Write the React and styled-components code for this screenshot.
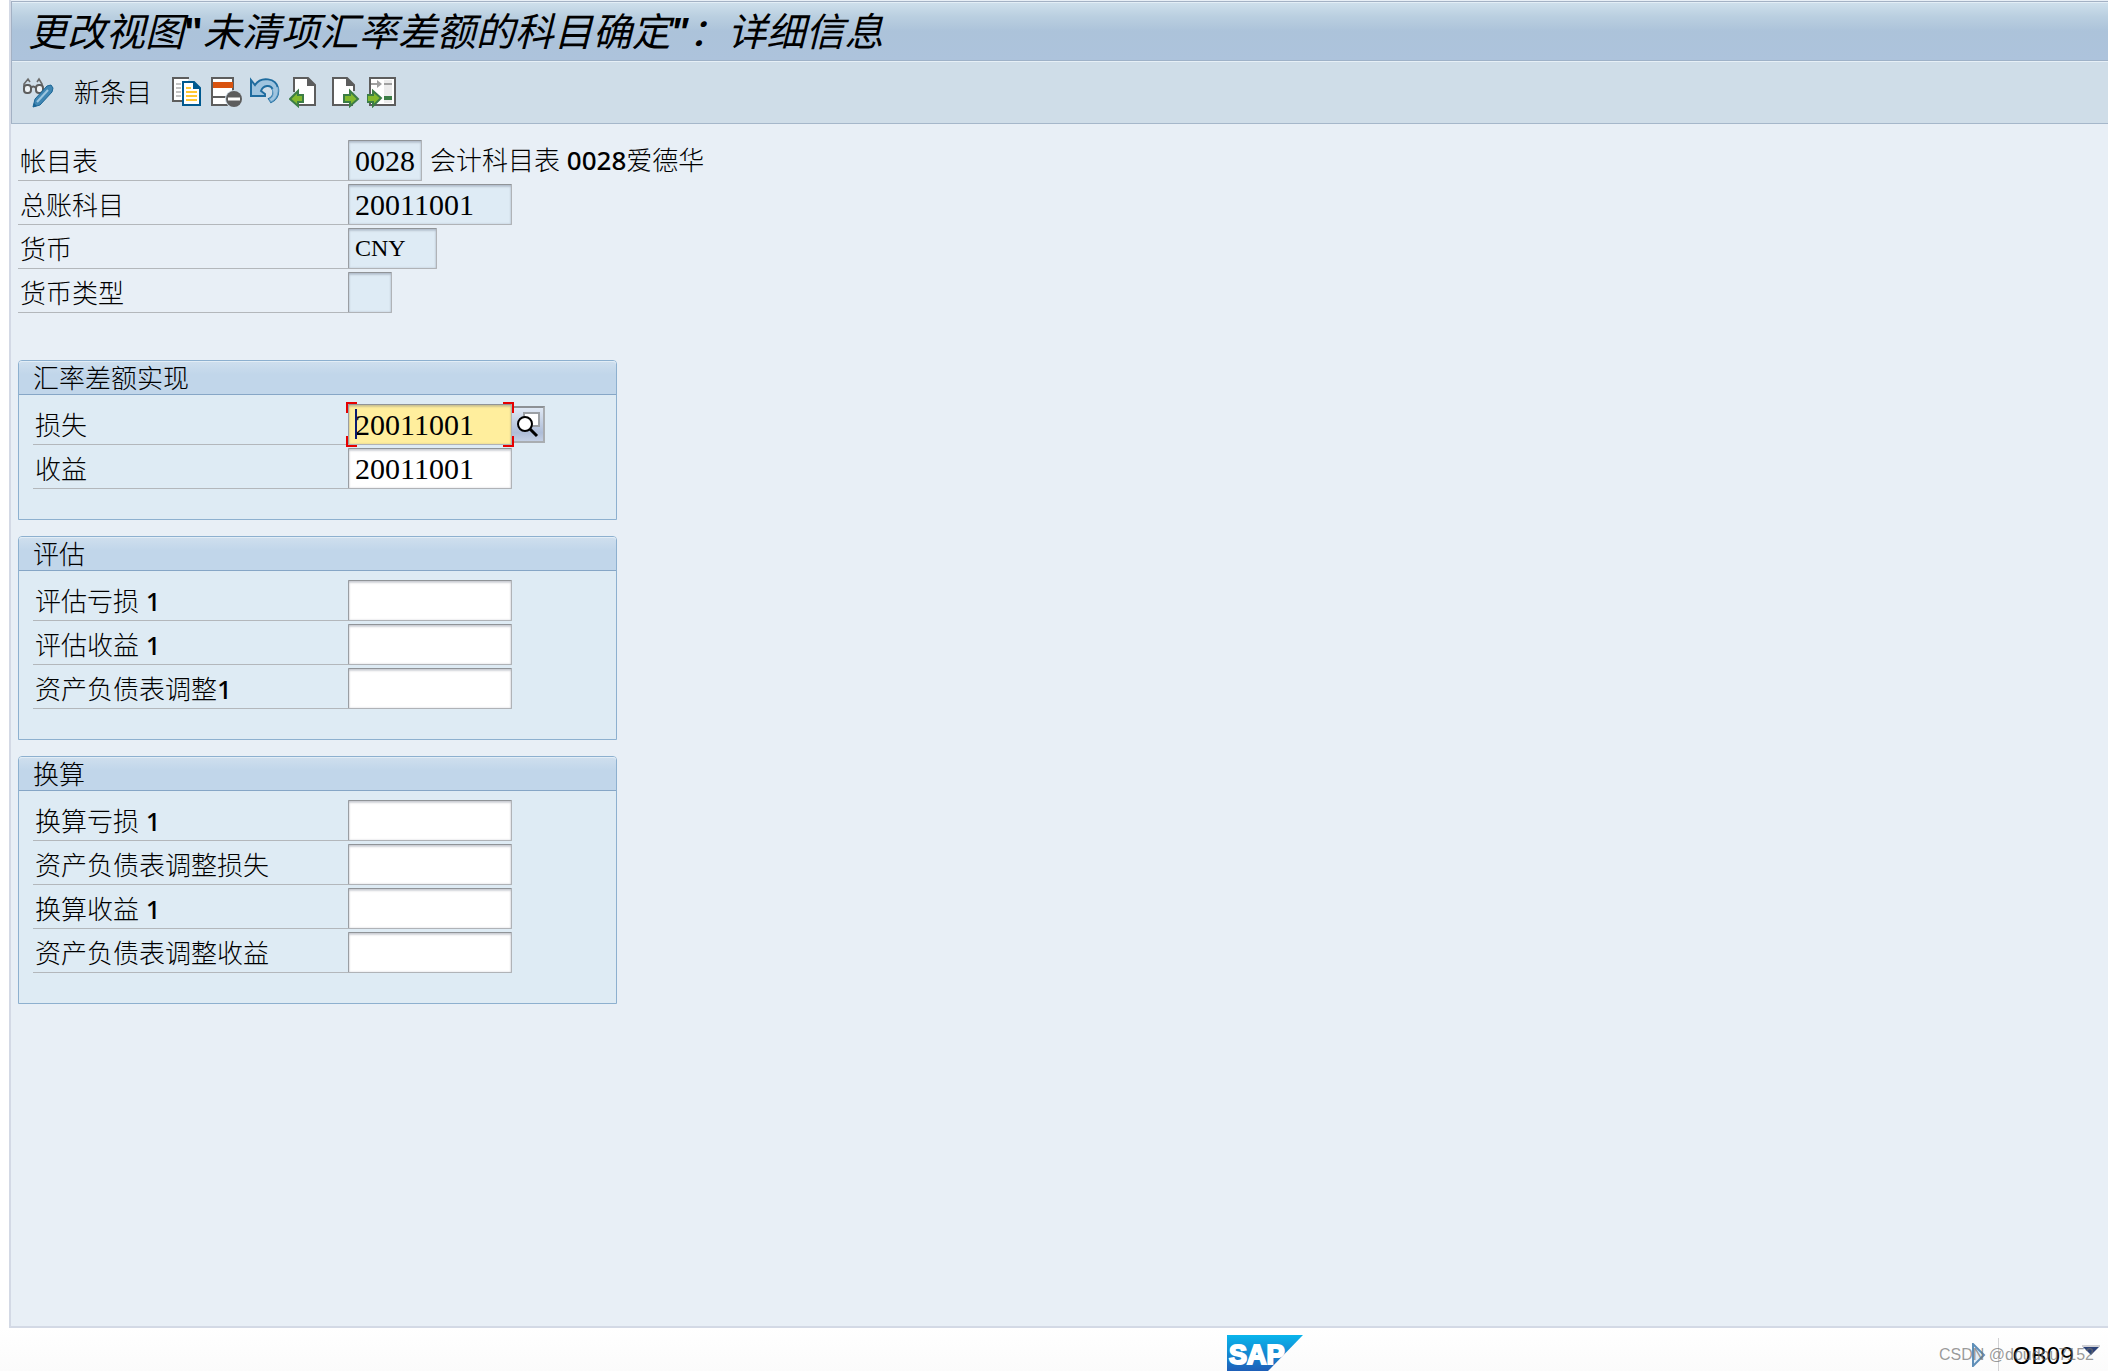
import React from "react";
import styled, { createGlobalStyle, css } from "styled-components";

const sans = `"Noto Sans", "Noto Sans CJK SC", sans-serif`;

const GlobalStyle = createGlobalStyle`
  *, *::before, *::after { box-sizing: border-box; }
  body {
    margin: 0;
    background: #ffffff;
    color: #000000;
    font-family: ${sans};
    font-size: 26px;
    font-weight: 300;
  }
`;

const Page = styled.div`
  display: flex;
  flex-direction: column;
  min-height: 100vh;
  overflow: hidden;
`;

const Window = styled.main`
  flex: 1;
  display: flex;
  flex-direction: column;
  margin-left: 9px;
  padding-top: 1px;
  border-left: 2px solid #d3d9e5;
  border-bottom: 2px solid #d3d9e5;
  background: #e8eff6;
`;

const TitleBar = styled.header`
  display: flex;
  align-items: center;
  height: 60px;
  padding-left: 16px;
  border-top: 1px solid #a3b1c4;
  border-left: 1px solid #a3b1c4;
  border-bottom: 1px solid #9fb2c8;
  background: linear-gradient(#cfe0ec 0%, #bacfe0 25%, #acc3da 50%, #adc3dc 100%);
  box-shadow: inset 0 2px 0 -1px #e3eef6;
`;

const Title = styled.h1`
  margin: 0;
  font-size: 39px;
  line-height: 52px;
  font-style: italic;
  font-weight: 400;
  white-space: pre;
`;

const Quote = styled.span`
  font-weight: 700;
  font-style: ${(p) => (p.$upright ? "normal" : "italic")};
`;

const Toolbar = styled.div`
  display: flex;
  align-items: center;
  gap: 20px;
  height: 63px;
  padding-left: 10px;
  border-left: 1px solid #a3b1c4;
  border-bottom: 1px solid #a5b7ca;
  background: #cfdde8;
  box-shadow: inset 0 1px 0 #e6eff6;
`;

const IconGroup = styled.div`
  display: flex;
  gap: 7px;
`;

const ToolButton = styled.button`
  display: flex;
  align-items: center;
  justify-content: flex-start;
  height: 32px;
  min-width: 32px;
  padding: 0;
  border: 0;
  background: none;
  color: inherit;
  font: inherit;
  line-height: 34px;

  svg { display: block; }
`;

const Content = styled.form`
  display: flex;
  flex-direction: column;
  flex: 1;
  align-items: flex-start;
  gap: 16px;
  padding: 16px 7px;
`;

const Rows = styled.div`
  display: flex;
  flex-direction: column;
  gap: 3px;
  align-self: stretch;
`;

const KeyRows = styled(Rows)`
  margin-bottom: 31px;
`;

const Row = styled.div`
  display: flex;
  align-items: center;
  height: 41px;
`;

const Label = styled.label`
  align-self: stretch;
  width: ${(p) => (p.$nested ? 315 : 330)}px;
  padding-left: 2px;
  border-bottom: 1px solid #b3b7bb;
  line-height: 43px;
  white-space: nowrap;
`;

const Digits = styled.span`
  font-weight: 500;
`;

const FieldBox = styled.span`
  position: relative;
  display: flex;
  height: 41px;
`;

const Field = styled.input`
  width: ${(p) => p.$width}px;
  height: 41px;
  padding: 0 6px;
  border: 1px solid #b0b3b7;
  border-top-color: #909498;
  border-left-color: #9a9ea3;
  border-radius: 1px;
  outline: 0;
  color: #000000;
  font-family: "Liberation Serif", "Noto Sans CJK SC", serif;
  font-size: ${(p) => (p.$letters ? 24 : 30)}px;
  font-weight: 400;
  background: #ffffff;
  box-shadow: inset 0 2px 2px rgba(90, 100, 120, 0.25), inset 0 0 2px rgba(90, 100, 120, 0.3);

  ${(p) => p.readOnly && css`background: #deebf5;`}
  ${(p) => p.$active && css`background: #ffee9d;`}
`;

const Corner = styled.span`
  position: absolute;
  width: 11px;
  height: 11px;
  border: 0 solid #e60000;
  pointer-events: none;
  ${(p) => p.$v}: -2px;
  ${(p) => p.$h}: -2px;
  border-${(p) => p.$v}-width: 2px;
  border-${(p) => p.$h}-width: 2px;
`;

const Caret = styled.span`
  position: absolute;
  left: 7px;
  top: 5px;
  width: 2px;
  height: 30px;
  background: #0a1a6e;
`;

const SearchButton = styled.button`
  display: flex;
  align-items: center;
  justify-content: center;
  width: 33px;
  height: 37px;
  padding: 0;
  border: 0 solid #a9adb1;
  border-width: 2px 2px 2px 0;
  border-top-color: #8d9195;
  background: linear-gradient(#dfe8f4, #aebdd8 75%, #c3cfe4);
`;

const FieldNote = styled.span`
  padding-left: 8px;
  line-height: 43px;
`;

const Group = styled.fieldset`
  display: flex;
  flex-direction: column;
  width: 599px;
  min-width: 0;
  margin: 0;
  padding: 0;
  border: 1px solid #8db0cf;
  border-radius: 4px 4px 0 0;
  background: #deebf4;
`;

const GroupTitle = styled.legend`
  float: left;
  width: 100%;
  height: 34px;
  padding: 0 14px;
  border-bottom: 1px solid #86a6c6;
  border-radius: 3px 3px 0 0;
  line-height: 34px;
  background: linear-gradient(#cfdfee, #c1d6ea 40%, #c1d6ea);
  box-shadow: inset 0 1px 0 #e2edf6;
`;

const GroupBody = styled.div`
  padding: 9px 0 30px 14px;
`;

const Footer = styled.footer`
  position: relative;
  display: flex;
  align-items: center;
  justify-content: flex-end;
  height: 43px;
  padding: 0 8px 0 9px;
  background: linear-gradient(#ffffff, #fbfbfb);
`;

const LogoSlot = styled.div`
  display: flex;
  flex: 1;
  justify-content: center;
  padding: 7px 0 0 549px;
`;

const Status = styled.div`
  display: flex;
  align-items: center;
  font-size: 24px;
  font-weight: 400;
  line-height: 34px;
  padding-top: 10px;
`;

const StatusButton = styled.button`
  display: flex;
  padding: 0;
  border: 0;
  background: none;
`;

const Divider = styled.span`
  width: 1px;
  height: 34px;
  margin: 0 13px 0 12px;
  background: #d2d2d4;
`;

const Code = styled.span`
  margin-right: 8px;
`;

const Watermark = styled.span`
  position: absolute;
  right: 14px;
  top: 16px;
  color: rgba(110, 110, 110, 0.7);
  font-family: "Liberation Sans", sans-serif;
  font-size: 16px;
  font-weight: 400;
  line-height: 22px;
`;

const Svg = ({ w = 32, h = 32, children }) => (
  <svg width={w} height={h} viewBox={`0 0 ${w} ${h}`} fill="none" aria-hidden="true">
    {children}
  </svg>
);

const DisplayChangeIcon = () => (
  <Svg>
    <path d="M2 11 V8 L6 3 L8 6 M20 11 V8 L17 3 L15 6" stroke="#6a6a6a" strokeWidth="1.6" />
    <rect x="2" y="9" width="7" height="8" rx="3" fill="#eef2f5" stroke="#5d5d5d" strokeWidth="2" />
    <rect x="14" y="9" width="7" height="8" rx="3" fill="#eef2f5" stroke="#5d5d5d" strokeWidth="2" />
    <path d="M9 12 Q11 9 14 12" stroke="#5d5d5d" strokeWidth="2" />
    <path d="M11 31 L13 23 L25 10 L29 9 L31 12 L30 16 L18 29 Z" fill="#3f86b3" stroke="#1b6595" strokeWidth="1" />
    <path d="M15 26 L26 14" stroke="#9cc6e0" strokeWidth="2" />
    <path d="M11 31 L12 27 L15 30 Z" fill="#1b6595" />
  </Svg>
);

const CopyIcon = () => (
  <Svg>
    <path d="M17 2 H1 V25 H10" fill="#fff" stroke="#5d5d5d" strokeWidth="2" />
    <path d="M4 8h5M4 12h5M4 16h5M4 20h5" stroke="#c4c4c4" strokeWidth="2" />
    <path d="M11 6 H22 L28 12 V29 H11 Z" fill="#fff" stroke="#00598f" strokeWidth="2" />
    <path d="M21 5 L29 13 H21 Z" fill="#00598f" />
    <path d="M14 12h5M14 16h11M14 20h11M14 24h11" stroke="#ffc832" strokeWidth="2" />
  </Svg>
);

const DeleteIcon = () => (
  <Svg>
    <rect x="1" y="2" width="21" height="27" fill="#fff" stroke="#5d5d5d" strokeWidth="2" />
    <path d="M2 9h20" stroke="#d9530f" strokeWidth="6" />
    <path d="M2 21h18" stroke="#5d5d5d" strokeWidth="2" />
    <circle cx="23" cy="23" r="9" fill="#cfdde8" />
    <circle cx="23" cy="23" r="8" fill="#5d5d5d" />
    <path d="M17 23h12" stroke="#fff" strokeWidth="3" />
  </Svg>
);

const UndoIcon = () => (
  <Svg>
    <path
      d="M1 4 V20 H15 V18 L11 15 C13 9 21 8 23 14 C24 18 23 21 19 23 L21 26 C27 23 29 18 28 12 C26 2 11 0 5 9 L1 4 Z"
      fill="#9fc4df"
      stroke="#1f6c9f"
      strokeWidth="2"
    />
    <path d="M22 13 C24 18 23 21 19 23 L21 26 C27 23 29 17 28 11" fill="#9fc4df" stroke="#5d9ac4" strokeWidth="1" />
  </Svg>
);

const arrow = { fill: "#82b92e", stroke: "#3c7d46", strokeWidth: 2 };

const PreviousIcon = () => (
  <Svg>
    <path d="M5 2 H19 L26 9 V29 H5 Z" fill="#fff" stroke="#5d5d5d" strokeWidth="2" />
    <path d="M18 1 L27 10 H18 Z" fill="#5d5d5d" />
    <path d="M0 16 h8 v14 h-8z" fill="#cfdde8" />
    <path d="M1 23 L9 15 V19 H14 V26 H9 V30 Z" {...arrow} />
  </Svg>
);

const NextIcon = () => (
  <Svg>
    <path d="M5 2 H19 L26 9 V29 H5 Z" fill="#fff" stroke="#5d5d5d" strokeWidth="2" />
    <path d="M18 1 L27 10 H18 Z" fill="#5d5d5d" />
    <path d="M25 15 h3 v15 h-3z" fill="#cfdde8" />
    <path d="M16 19 H22 V15 L30 23 L22 30 V26 H16 Z" {...arrow} />
  </Svg>
);

const PositionIcon = () => (
  <Svg>
    <rect x="3" y="2" width="25" height="27" fill="#fff" stroke="#5d5d5d" strokeWidth="2" />
    <rect x="17" y="4" width="8" height="23" fill="#ececec" />
    <path d="M4 8h9M17 8h8" stroke="#a0a0a0" strokeWidth="2" />
    <path d="M10 4l5 4l-5 4z" fill="#a0a0a0" />
    <path d="M17 22h8" stroke="#3c7d46" strokeWidth="4" />
    <path d="M0 19 H6 V15 L14 22 L6 30 V26 H0 Z" {...arrow} />
  </Svg>
);

const SearchHelpIcon = () => (
  <Svg w={24} h={28}>
    <rect x="8" y="2" width="15" height="13" fill="#fff" stroke="#9b9fa4" strokeWidth="2" />
    <circle cx="9" cy="13" r="7" fill="#fff" stroke="#000" strokeWidth="2" />
    <path d="M14 18 L21 25" stroke="#000" strokeWidth="3" />
  </Svg>
);

const SapLogo = () => (
  <svg width="76" height="36" viewBox="0 0 76 36" role="img" aria-label="SAP">
    <defs>
      <linearGradient id="sap" x1="0" y1="0" x2="0" y2="1">
        <stop offset="0" stopColor="#09b5ec" />
        <stop offset="1" stopColor="#1f5fb8" />
      </linearGradient>
    </defs>
    <path d="M0 0 H76 L41 36 H0 Z" fill="url(#sap)" />
    <text x="2" y="29" fill="#fff" fontFamily="Liberation Sans, sans-serif" fontWeight="700" fontSize="27" stroke="#fff" strokeWidth="2">
      SAP
    </text>
  </svg>
);

const MixedText = ({ text }) =>
  text.split(/(\d+)/).map((part, i) => (i % 2 ? <Digits key={i}>{part}</Digits> : part));

const FormRow = ({ id, label, value = "", width = 164, nested, active, readOnly, letters, note }) => (
  <Row>
    <Label htmlFor={id} $nested={nested}><MixedText text={label} /></Label>
    <FieldBox>
      <Field id={id} defaultValue={value} $width={width} $active={active} $letters={letters} readOnly={readOnly} />
      {active && (
        <>
          <Corner $v="top" $h="left" />
          <Corner $v="top" $h="right" />
          <Corner $v="bottom" $h="left" />
          <Corner $v="bottom" $h="right" />
          <Caret />
        </>
      )}
    </FieldBox>
    {active && (
      <SearchButton type="button" aria-label="搜索帮助"><SearchHelpIcon /></SearchButton>
    )}
    {note && <FieldNote><MixedText text={note} /></FieldNote>}
  </Row>
);

const keyFields = [
  { id: "chart", label: "帐目表", value: "0028", width: 74, note: "会计科目表 0028爱德华" },
  { id: "account", label: "总账科目", value: "20011001" },
  { id: "currency", label: "货币", value: "CNY", width: 89, letters: true },
  { id: "currencyType", label: "货币类型", width: 44 },
];

const groups = [
  {
    title: "汇率差额实现",
    fields: [
      { id: "loss", label: "损失", value: "20011001", active: true },
      { id: "gain", label: "收益", value: "20011001" },
    ],
  },
  {
    title: "评估",
    fields: [
      { id: "valLoss", label: "评估亏损 1" },
      { id: "valGain", label: "评估收益 1" },
      { id: "valAdjust", label: "资产负债表调整1" },
    ],
  },
  {
    title: "换算",
    fields: [
      { id: "trLoss", label: "换算亏损 1" },
      { id: "trLossAdjust", label: "资产负债表调整损失" },
      { id: "trGain", label: "换算收益 1" },
      { id: "trGainAdjust", label: "资产负债表调整收益" },
    ],
  },
];

const tools = [
  ["复制", CopyIcon],
  ["删除", DeleteIcon],
  ["撤销", UndoIcon],
  ["上一条目", PreviousIcon],
  ["下一条目", NextIcon],
  ["定位", PositionIcon],
];

export default function App() {
  return (
    <Page>
      <GlobalStyle />
      <Window>
        <TitleBar>
          <Title>
            更改视图<Quote $upright>"</Quote>未清项汇率差额的科目确定<Quote>"</Quote>：详细信息
          </Title>
        </TitleBar>
        <Toolbar>
          <ToolButton type="button" aria-label="显示/更改"><DisplayChangeIcon /></ToolButton>
          <ToolButton type="button">新条目</ToolButton>
          <IconGroup>
            {tools.map(([name, Icon]) => (
              <ToolButton key={name} type="button" aria-label={name}><Icon /></ToolButton>
            ))}
          </IconGroup>
        </Toolbar>
        <Content>
          <KeyRows>
            {keyFields.map((f) => <FormRow key={f.id} {...f} readOnly />)}
          </KeyRows>
          {groups.map((g) => (
            <Group key={g.title}>
              <GroupTitle>{g.title}</GroupTitle>
              <GroupBody>
                <Rows>
                  {g.fields.map((f) => <FormRow key={f.id} {...f} nested />)}
                </Rows>
              </GroupBody>
            </Group>
          ))}
        </Content>
      </Window>
      <Footer>
        <LogoSlot><SapLogo /></LogoSlot>
        <Status>
          <StatusButton type="button" aria-label="展开">
            <Svg w={14} h={24}>
              <path d="M1 1 L12 12 L1 23 Z" fill="#e4eef6" stroke="#5f8fb8" strokeWidth="2" />
            </Svg>
          </StatusButton>
          <Divider />
          <Code>OB09</Code>
          <StatusButton type="button" aria-label="菜单">
            <Svg w={18} h={20}>
              <path d="M0 1 H18" stroke="#d0d0d4" strokeWidth="2" />
              <path d="M1 2 H17 L9 10 Z" fill="#2c4277" />
            </Svg>
          </StatusButton>
        </Status>
        <Watermark>CSDN @doudou7152</Watermark>
      </Footer>
    </Page>
  );
}
